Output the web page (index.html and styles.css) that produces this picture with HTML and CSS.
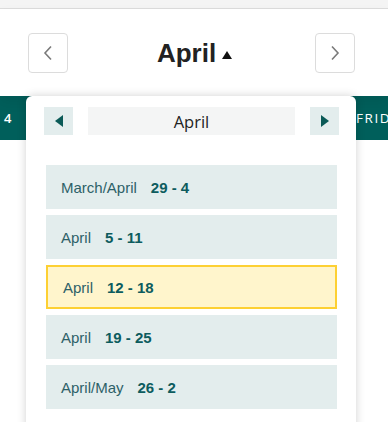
FILE: index.html
```html
<!DOCTYPE html>
<html>
<head>
<meta charset="utf-8">
<link rel="stylesheet" href="styles.css">
</head>
<body>
<div class="topstrip"></div>
<header class="header">
  <button class="navbtn" aria-label="Previous">
    <svg width="12" height="16" viewBox="0 0 12 16"><path d="M9 1.5 L3 8 L9 14.5" fill="none" stroke="#7a7a7a" stroke-width="1.6"/></svg>
  </button>
  <div class="title">April<span class="caret"></span></div>
  <button class="navbtn" aria-label="Next">
    <svg width="12" height="16" viewBox="0 0 12 16"><path d="M3 1.5 L9 8 L3 14.5" fill="none" stroke="#7a7a7a" stroke-width="1.6"/></svg>
  </button>
</header>
<div class="daybar">
  <span class="day-left">4</span>
  <span class="day-right">FRIDAY</span>
</div>
<div class="dropdown">
  <div class="dd-nav">
    <button class="dd-arrow" aria-label="Previous month"><span class="tri tri-left"></span></button>
    <div class="dd-label">April</div>
    <button class="dd-arrow" aria-label="Next month"><span class="tri tri-right"></span></button>
  </div>
  <ul class="weeks">
    <li class="week"><span class="wm">March/April</span><b class="wd">29 - 4</b></li>
    <li class="week"><span class="wm">April</span><b class="wd">5 - 11</b></li>
    <li class="week selected"><span class="wm">April</span><b class="wd">12 - 18</b></li>
    <li class="week"><span class="wm">April</span><b class="wd">19 - 25</b></li>
    <li class="week"><span class="wm">April/May</span><b class="wd">26 - 2</b></li>
  </ul>
</div>
</body>
</html>
```

FILE: styles.css
```css
html, body {
  margin: 0;
  padding: 0;
  background: #ffffff;
  font-family: "Liberation Sans", Arial, sans-serif;
  overflow: hidden;
  height: 422px;
}
.topstrip {
  height: 8px;
  background: #f4f4f4;
  border-bottom: 1px solid #dcdcdc;
}
.header {
  position: relative;
  z-index: 2;
  height: 87px;
  background: #fff;
  display: grid;
  grid-template-columns: 40px 1fr 40px;
  align-items: center;
  padding: 0 33px 0 28px;
  box-shadow: 0 6px 12px rgba(0,0,0,0.07);
}
.navbtn {
  width: 40px;
  height: 40px;
  border: 1px solid #dcdcdc;
  border-radius: 4px;
  background: #fff;
  display: flex;
  align-items: center;
  justify-content: center;
  padding: 0;
}
.title {
  justify-self: center;
  padding-left: 6px;
  font-size: 26px;
  font-weight: bold;
  color: #222;
  display: flex;
  align-items: center;
  margin-top: 2px;
}
.caret {
  width: 0;
  height: 0;
  border-left: 5px solid transparent;
  border-right: 5px solid transparent;
  border-bottom: 8px solid #111;
  margin-left: 6px;
  margin-top: 3px;
}
.daybar {
  position: relative;
  z-index: 1;
  height: 44px;
  background: #005f5b;
  color: #fff;
  display: flex;
  align-items: center;
  font-family: "Open Sans", sans-serif;
  font-size: 13px;
  overflow: hidden;
}
.day-left {
  padding-left: 4px;
  font-weight: 600;
}
.day-right {
  margin-left: auto;
  width: 32px;
  overflow: hidden;
  white-space: nowrap;
  letter-spacing: 1.6px;
  font-size: 13.5px;
}
.dropdown {
  position: absolute;
  z-index: 3;
  left: 26px;
  top: 96px;
  width: 330px;
  height: 360px;
  background: #fff;
  border-radius: 6px;
  box-shadow: 0 0 10px rgba(0,0,0,0.18);
  padding: 11px 17px 0 18px;
  box-sizing: border-box;
}
.dd-nav {
  display: flex;
  align-items: center;
  gap: 15px;
  height: 28px;
}
.dd-arrow {
  width: 29px;
  height: 28px;
  border: none;
  padding: 0;
  background: #e3eded;
  display: flex;
  align-items: center;
  justify-content: center;
}
.tri {
  width: 0;
  height: 0;
  border-top: 6px solid transparent;
  border-bottom: 6px solid transparent;
}
.tri-left { border-right: 8px solid #0a5a57; }
.tri-right { border-left: 8px solid #0a5a57; }
.dd-label {
  flex: 1;
  height: 28px;
  background: #f4f5f5;
  display: flex;
  align-items: center;
  justify-content: center;
  font-family: "Open Sans", sans-serif;
  font-size: 16.5px;
  color: #222;
}
.weeks {
  list-style: none;
  margin: 30px 2px 0 2px;
  padding: 0;
  display: flex;
  flex-direction: column;
  gap: 6px;
}
.week {
  height: 44px;
  box-sizing: border-box;
  background: #e3eded;
  display: flex;
  align-items: center;
  padding-left: 15px;
  font-size: 15px;
}
.week.selected {
  background: #fff5cc;
  border: 2px solid #fdd033;
  padding-left: 15px;
}
.wm {
  color: #2d6168;
  margin-right: 14px;
}
.wd {
  color: #0d5c5e;
  font-weight: bold;
}
```
